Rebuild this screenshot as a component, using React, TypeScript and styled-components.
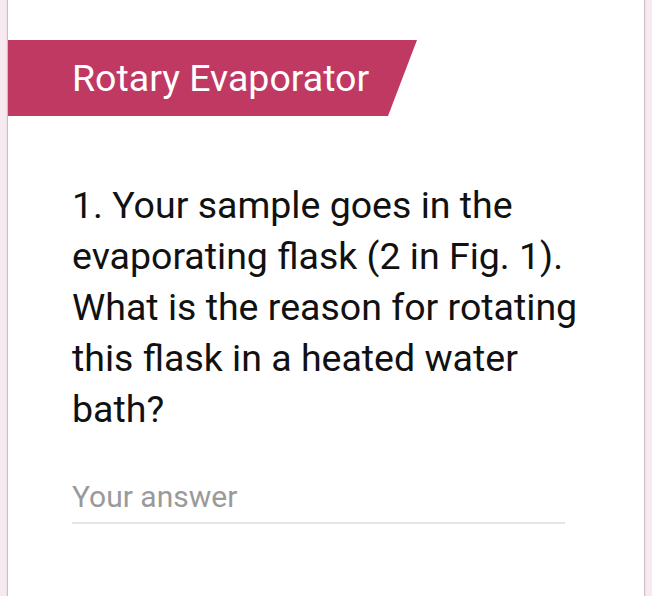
import React from "react";
import styled, { createGlobalStyle } from "styled-components";

const Global = createGlobalStyle`
  html, body { margin: 0; padding: 0; }
  body {
    background: #f7e9f0;
    font-family: Roboto, "Noto Sans", "Liberation Sans", sans-serif;
    overflow: hidden;
  }
`;

const Page = styled.div`
  padding: 0 8px;
  height: 596px;
  display: flex;
  flex-direction: column;
`;

const Card = styled.section`
  flex: 1;
  background: #ffffff;
  box-shadow: 0 0 1px 1px rgba(120, 90, 105, 0.3);
  padding-top: 40px;
  display: flex;
  flex-direction: column;
`;

const Banner = styled.header`
  width: 409px;
  height: 76px;
  background: #bf3962;
  clip-path: polygon(0 0, 100% 0, calc(100% - 29px) 100%, 0 100%);
  display: flex;
  align-items: center;
  padding-left: 64px;
  box-sizing: border-box;
`;

const Title = styled.h1`
  margin: 0;
  color: #ffffff;
  font-size: 37.5px;
  font-weight: 400;
  white-space: nowrap;
`;

const Body = styled.div`
  padding: 64px 40px 0 64px;
  display: flex;
  flex-direction: column;
`;

const Question = styled.p`
  margin: 0;
  color: #111111;
  font-size: 37.5px;
  line-height: 51px;
  font-weight: 400;
`;

const Answer = styled.div`
  margin-top: 44px;
  width: 493px;
  border-bottom: 2px solid #e6e6e6;
  padding-bottom: 7px;
`;

const Placeholder = styled.span`
  display: block;
  color: #9a9a9a;
  font-size: 30px;
  line-height: 36px;
`;

export default function App() {
  return (
    <>
      <Global />
      <Page>
        <Card>
          <Banner>
            <Title>Rotary Evaporator</Title>
          </Banner>
          <Body>
            <Question>
              1. Your sample goes in the evaporating flask (2 in Fig. 1). What is
              the reason for rotating this flask in a heated water bath?
            </Question>
            <Answer>
              <Placeholder>Your answer</Placeholder>
            </Answer>
          </Body>
        </Card>
      </Page>
    </>
  );
}
